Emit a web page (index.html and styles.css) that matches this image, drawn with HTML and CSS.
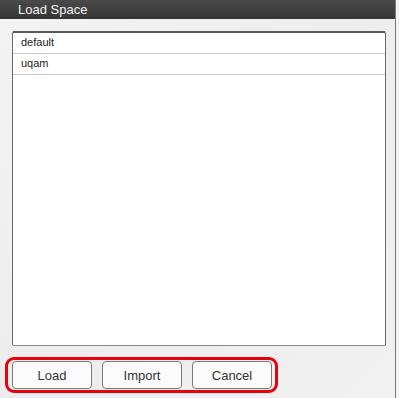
FILE: index.html
```html
<!DOCTYPE html>
<html>
<head>
<meta charset="utf-8">
<link rel="stylesheet" href="styles.css">
</head>
<body>
<div class="window">
  <div class="titlebar">Load Space</div>
  <div class="content">
    <div class="list">
      <div class="row">default</div>
      <div class="row">uqam</div>
    </div>
    <div class="actions">
      <button class="btn">Load</button>
      <button class="btn">Import</button>
      <button class="btn">Cancel</button>
    </div>
  </div>
</div>
</body>
</html>
```
FILE: styles.css
```css
html, body {
  margin: 0;
  padding: 0;
  background: #f2f2f2;
  font-family: "Liberation Sans", Arial, sans-serif;
}
.window {
  width: 395px;
  height: 398px;
  border-right: 1px solid #7a7a7a;
  background: linear-gradient(135deg, #f3f3f3 0%, #ededed 50%, #f1f1f1 100%);
  box-sizing: content-box;
}
.titlebar {
  height: 19px;
  line-height: 20px;
  padding-left: 18px;
  font-size: 13px;
  color: #f4f4f4;
  background: linear-gradient(#4a4a4a, #353535);
}
.content {
  padding-top: 12px;
}
.list {
  margin-left: 12px;
  width: 372px;
  height: 312px;
  background: #fff;
  border-top: 2px solid #5a5a5a;
  border-left: 1px solid #6a6a6a;
  border-right: 1px solid #6a6a6a;
  border-bottom: 1px solid #8a8a8a;
  border-radius: 2px;
}
.row {
  height: 20px;
  line-height: 19px;
  padding-left: 8px;
  font-size: 11px;
  color: #1a1a1a;
  border-bottom: 1px solid #c8c8c8;
}
.actions {
  margin-top: 11px;
  margin-left: 5px;
  width: 260px;
  display: flex;
  gap: 10px;
  border: 3px solid #e8000b;
  border-radius: 9px;
  padding: 1px 3px 1px 4px;
}
.btn {
  width: 80px;
  height: 28px;
  margin: 0;
  padding: 0;
  background: #fbfbfb;
  border: 1px solid #7a7a7a;
  border-radius: 4px;
  font-family: "Liberation Sans", Arial, sans-serif;
  font-size: 13px;
  color: #333;
}
```
